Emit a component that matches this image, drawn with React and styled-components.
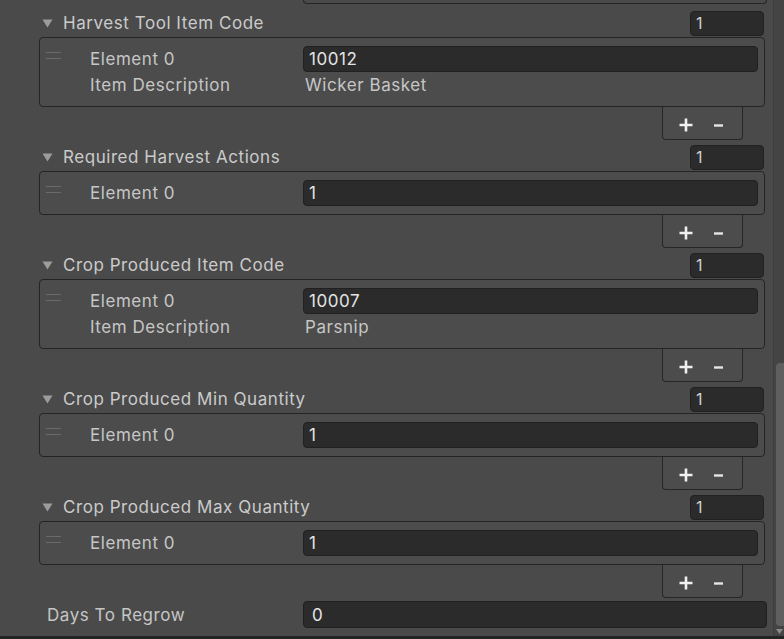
import React from 'react'
import styled, { createGlobalStyle } from 'styled-components'

const GlobalStyle = createGlobalStyle`
  html, body {
    margin: 0;
    padding: 0;
    background: #4a4a4a;
    overflow: hidden;
  }
  body {
    font-family: Inter, "Noto Sans", sans-serif;
  }
`

const sections = [
  { title: 'Harvest Tool Item Code', count: 1, code: '10012', desc: 'Wicker Basket' },
  { title: 'Required Harvest Actions', count: 1, code: '1' },
  { title: 'Crop Produced Item Code', count: 1, code: '10007', desc: 'Parsnip' },
  { title: 'Crop Produced Min Quantity', count: 1, code: '1' },
  { title: 'Crop Produced Max Quantity', count: 1, code: '1' },
]

const App = () => {
  return (
    <>
      <GlobalStyle />
      <Window>
        <Inspector>
          <Content>
            <CutOffField />
            {sections.map((s) => (
              <Section key={s.title}>
                <HeaderRow>
                  <Foldout>
                    <svg width="11" height="9" viewBox="0 0 11 9">
                      <path d="M0.5 0.5 H10.5 L5.5 8.5 Z" fill="#9c9c9c" />
                    </svg>
                  </Foldout>
                  <HeaderLabel>{s.title}</HeaderLabel>
                  <CountField>{s.count}</CountField>
                </HeaderRow>
                <ListBox>
                  <Row>
                    <Handle>
                      <span />
                      <span />
                    </Handle>
                    <RowLabel>Element 0</RowLabel>
                    <Field>{s.code}</Field>
                  </Row>
                  {s.desc && (
                    <Row>
                      <span />
                      <RowLabel>Item Description</RowLabel>
                      <PlainValue>{s.desc}</PlainValue>
                    </Row>
                  )}
                </ListBox>
                <FooterWrap>
                  <Footer>
                    <svg width="14" height="14" viewBox="0 0 14 14">
                      <path d="M7 0.5 V13.5 M0.5 7 H13.5" stroke="#f0f0f0" strokeWidth="2.6" />
                    </svg>
                    <svg width="9" height="3" viewBox="0 0 9 3">
                      <path d="M0 1.5 H9" stroke="#e6e6e6" strokeWidth="2.4" />
                    </svg>
                  </Footer>
                </FooterWrap>
              </Section>
            ))}
            <PlainRow>
              <PlainLabel>Days To Regrow</PlainLabel>
              <WideField>0</WideField>
            </PlainRow>
          </Content>
          <Scrollbar>
            <Thumb />
            <ScrollArrow>
              <svg width="7" height="5" viewBox="0 0 7 5">
                <path d="M0 0 H7 L3.5 5 Z" fill="#8a8a8a" />
              </svg>
            </ScrollArrow>
          </Scrollbar>
        </Inspector>
        <BottomBar />
      </Window>
    </>
  )
}

export default App

const Window = styled.div`
  width: 784px;
  height: 639px;
  display: flex;
  flex-direction: column;
  background: #4a4a4a;
  overflow: hidden;
`

const Inspector = styled.div`
  flex: 1;
  display: flex;
  min-height: 0;
`

const Content = styled.div`
  flex: 1;
  padding: 0 6px 0 39px;
  display: flex;
  flex-direction: column;
`

const CutOffField = styled.div`
  margin-left: 264px;
  height: 3px;
  border: 1px solid #252525;
  border-top: none;
  border-radius: 0 0 4px 4px;
  margin-bottom: 6px;
`

const Section = styled.div`
  display: flex;
  flex-direction: column;
  margin-bottom: 4px;
`

const HeaderRow = styled.div`
  height: 26px;
  display: flex;
  align-items: center;
`

const Foldout = styled.div`
  width: 24px;
  display: flex;
  align-items: center;
  padding-left: 3px;
  box-sizing: border-box;
  svg { display: block; }
`

const textStyle = `
  font-size: 17px;
  letter-spacing: 0.55px;
`

const HeaderLabel = styled.div`
  color: #cbcbcb;
  ${textStyle}
`

const CountField = styled.div`
  margin-left: auto;
  margin-right: 3px;
  width: 74px;
  height: 25px;
  box-sizing: border-box;
  background: #2b2b2b;
  border: 1px solid #212121;
  border-radius: 4px;
  color: #d0d0d0;
  font-size: 16px;
  padding-left: 5px;
  display: flex;
  align-items: center;
`

const ListBox = styled.div`
  margin-top: 1px;
  margin-right: 2px;
  border: 1px solid #242424;
  border-radius: 4px;
  padding: 8px 0;
  background: #4c4c4c;
`

const Row = styled.div`
  height: 26px;
  display: grid;
  grid-template-columns: 50px 213px 1fr;
  align-items: center;
  padding-right: 6px;
`

const Handle = styled.div`
  display: flex;
  flex-direction: column;
  gap: 5px;
  align-self: start;
  padding: 6px 0 0 6px;
  span {
    display: block;
    width: 15px;
    height: 1px;
    background: #6a6a6a;
  }
`

const RowLabel = styled.div`
  color: #c6c6c6;
  ${textStyle}
`

const Field = styled.div`
  height: 26px;
  box-sizing: border-box;
  background: #2b2b2b;
  border: 1px solid #202020;
  border-radius: 4px;
  color: #e4e4e4;
  ${textStyle}
  padding-left: 5px;
  display: flex;
  align-items: center;
`

const PlainValue = styled.div`
  color: #c6c6c6;
  ${textStyle}
  padding-left: 2px;
`

const FooterWrap = styled.div`
  display: flex;
  justify-content: flex-end;
  padding-right: 24px;
`

const Footer = styled.div`
  width: 81px;
  height: 33px;
  box-sizing: border-box;
  border: 1px solid #262626;
  border-top: none;
  border-radius: 0 0 4px 4px;
  background: #4c4c4c;
  display: flex;
  align-items: center;
  justify-content: center;
  gap: 21px;
  padding: 4px 4px 0 0;
  svg { display: block; }
`

const PlainRow = styled.div`
  height: 27px;
  display: grid;
  grid-template-columns: 264px 1fr;
  align-items: center;
  margin-top: -1px;
`

const PlainLabel = styled.div`
  color: #c6c6c6;
  ${textStyle}
  padding-left: 8px;
`

const WideField = styled(Field)`
  height: 27px;
  padding-left: 8px;
`

const Scrollbar = styled.div`
  width: 10px;
  background: #444444;
  border-left: 1px solid #3e3e3e;
  display: flex;
  flex-direction: column;
  justify-content: flex-end;
  align-items: flex-end;
`

const Thumb = styled.div`
  width: 8px;
  height: 263px;
  background: #5f5f5f;
  border-radius: 4px 0 0 4px;
`

const ScrollArrow = styled.div`
  height: 10px;
  width: 9px;
  display: flex;
  align-items: center;
  justify-content: center;
  svg { display: block; }
`

const BottomBar = styled.div`
  height: 3px;
  background: #242424;
`
